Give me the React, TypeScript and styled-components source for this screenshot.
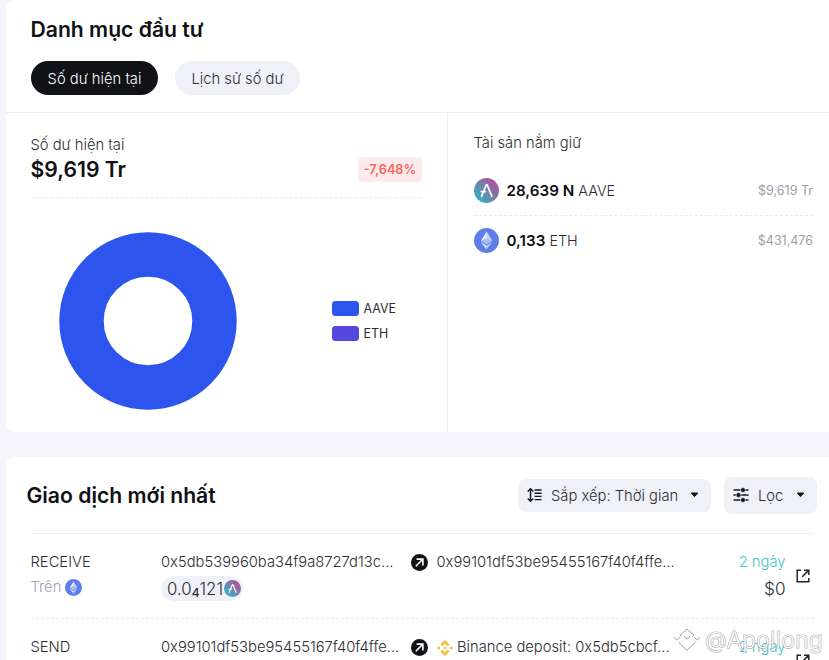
import React from "react";
import styled, { createGlobalStyle } from "styled-components";

const GlobalStyle = createGlobalStyle`
  *, *::before, *::after { box-sizing: border-box; }
  html, body { margin: 0; height: 100%; overflow: hidden; }
  body {
    background: #f6f5fc;
    color: #2c2d32;
    font-family: Inter, sans-serif;
    font-size: 14.75px;
    font-weight: 340;
  }
`;

const Page = styled.main`
  position: relative;
  display: flex;
  flex-direction: column;
  gap: 25px;
  height: 660px;
  padding-left: 6px;
  overflow: hidden;
`;

const Card = styled.section<{ $height: number }>`
  flex: none;
  display: flex;
  flex-direction: column;
  height: ${(p) => p.$height}px;
  background: #fff;
  border-radius: 9px 0 0 9px;
`;

const Title = styled.h2`
  margin: 0;
  font-size: 21.15px;
  font-weight: 600;
  line-height: 30px;
  color: #0f1013;
  white-space: nowrap;
`;

const CardHead = styled.header`
  height: 113px;
  padding: 15px 0 0 24.5px;
  border-bottom: 1px solid #ededf0;
`;

const Tabs = styled.nav`
  display: flex;
  gap: 17px;
  margin-top: 16px;
`;

const Tab = styled.button<{ $active?: boolean; $width: number }>`
  width: ${(p) => p.$width}px;
  height: 34px;
  padding: 2px 0 0 1px;
  border: 0;
  border-radius: 17px;
  font: inherit;
  line-height: 32px;
  white-space: nowrap;
  color: ${(p) => (p.$active ? "#fff" : "#2c2d32")};
  background: ${(p) => (p.$active ? "#111216" : "#f0f0f8")};
`;

const Columns = styled.div`
  display: grid;
  grid-template-columns: 442px 1fr;
  flex: 1;
`;

const Balance = styled.div`
  padding: 21px 25px 0 24.5px;
  border-right: 1px solid #ededf0;
`;

const Label = styled.div`
  line-height: 22px;
  white-space: nowrap;
`;

const BalanceLine = styled.div`
  display: flex;
  align-items: center;
  justify-content: space-between;
  height: 42px;
  padding-bottom: 15px;
  margin-bottom: 34px;
  border-bottom: 1px dashed #ececf0;
`;

const Amount = styled.div`
  font-size: 21.2px;
  font-weight: 600;
  line-height: 26px;
  color: #0f1013;
`;

const Change = styled.span`
  width: 64px;
  height: 25px;
  border-radius: 4px;
  background: #fdebec;
  color: #f8645c;
  font-size: 12.7px;
  font-weight: 600;
  line-height: 25px;
  text-align: center;
`;

const ChartArea = styled.div`
  display: flex;
  align-items: center;
  padding-left: 28.5px;
`;

const Legend = styled.ul`
  display: flex;
  flex-direction: column;
  gap: 10px;
  margin: 0 0 0 95px;
  padding: 0;
  list-style: none;
`;

const LegendItem = styled.li<{ $color: string }>`
  display: flex;
  align-items: center;
  gap: 5px;
  height: 15px;
  font-size: 12.4px;
  line-height: 15px;
  font-weight: 380;
  &::before {
    content: "";
    width: 26.5px;
    height: 15px;
    border-radius: 3.5px;
    background: ${(p) => p.$color};
  }
`;

const Holdings = styled.div`
  padding: 19px 16px 0 25.5px;
  ${Label} { margin-bottom: 10px; }
`;

const Holding = styled.div`
  display: flex;
  align-items: center;
  height: 52px;
  white-space: nowrap;
  & + & { height: 50px; border-top: 1px dashed #ececf0; margin-top: -1px; }
`;

const HoldingName = styled.span`
  flex: 1;
  margin-left: 8px;
  font-size: 14.4px;
  b { font-size: 15.2px; font-weight: 600; color: #0f1013; }
`;

const Worth = styled.span`
  font-size: 12.5px;
  font-weight: 400;
  color: #9c9eab;
`;

const ListHead = styled.header`
  display: flex;
  align-items: center;
  flex: none;
  height: 76px;
  padding: 0 12px 0 20.5px;
  ${Title} { flex: 1; padding-top: 1px; }
`;

const DropButton = styled.button<{ $width: number; $height: number; $gap: number }>`
  display: flex;
  align-items: center;
  width: ${(p) => p.$width}px;
  height: ${(p) => p.$height}px;
  margin-left: 13px;
  padding: 0 12px 0 9px;
  border: 0;
  border-radius: 8px;
  background: #f0f0f7;
  color: #2c2d32;
  font: inherit;
  white-space: nowrap;
  span { flex: 1; margin-left: ${(p) => p.$gap}px; padding-top: 2px; text-align: left; }
`;

const Rows = styled.div`
  margin: 0 15.5px 0 24.5px;
  border-top: 1px solid #eeeef1;
`;

const Row = styled.article`
  display: grid;
  grid-template-columns: 130.5px 250px 25.5px 1fr 80px 28px;
  height: 85px;
  padding-top: 17px;
  border-bottom: 1px dashed #e9e9ed;
  white-space: nowrap;
`;

const Cell = styled.div<{ $end?: boolean }>`
  display: flex;
  flex-direction: column;
  gap: 2px;
  align-items: ${(p) => (p.$end ? "flex-end" : "flex-start")};
`;

const Line = styled.div`
  display: flex;
  align-items: center;
  height: 23px;
  line-height: 23px;
`;

const Network = styled(Line)`
  gap: 4px;
  height: 22px;
  color: #a0a1ad;
`;

const Recipient = styled(Line)`
  gap: 4.5px;
`;

const Time = styled(Line)`
  color: #3cc5cb;
`;

const Value = styled(Line)`
  height: 25px;
  font-size: 17.2px;
`;

const Token = styled.div`
  display: flex;
  align-items: center;
  width: 82px;
  height: 25px;
  padding-left: 6px;
  border-radius: 12.5px;
  background: #f0f0f8;
  font-size: 16.8px;
  sub {
    align-self: flex-end;
    font-size: 12px;
    font-weight: 450;
    line-height: 17px;
  }
  svg { margin-left: 1px; }
`;

const OpenLink = styled.div`
  padding: 18px 0 0 10.5px;
`;

const Watermark = styled.div`
  position: absolute;
  left: 673px;
  top: 624px;
  display: flex;
  align-items: center;
  gap: 4px;
  height: 30px;
  font-size: 22.6px;
  font-weight: 300;
  letter-spacing: 0.4px;
  white-space: nowrap;
  color: rgba(255, 255, 255, 0.95);
  -webkit-text-stroke: 1.2px rgba(125, 125, 130, 0.65);
  paint-order: stroke fill;
  pointer-events: none;
  svg { flex: none; margin-top: 1px; }
`;

const AaveIcon = ({ size, id }: { size: number; id: string }) => (
  <svg width={size} height={size} viewBox="0 0 25 25">
    <defs>
      <linearGradient id={id} x1="0.1" y1="0.85" x2="0.85" y2="0.15">
        <stop offset="0.05" stopColor="#35afc0" />
        <stop offset="0.95" stopColor="#ac5599" />
      </linearGradient>
    </defs>
    <circle cx="12.5" cy="12.5" r="12.5" fill={`url(#${id})`} />
    <path d="M7.6 18.4 9 14.9M10 12.4l2-5q.7-1.4 1.4 0l4.4 11M7.2 13.6h4.2" fill="none" stroke="#fff" strokeWidth="1.7" strokeLinecap="round" />
  </svg>
);

const EthIcon = ({ size }: { size: number }) => (
  <svg width={size} height={size} viewBox="0 0 25 25">
    <circle cx="12.5" cy="12.5" r="12.5" fill="#5f7ee9" />
    <path d="M12.5 3.5 7 12.8l5.5 3.2 5.5-3.2z" fill="#e9edfd" />
    <path d="M12.5 3.5V16l5.5-3.2z" fill="#c3cef8" />
    <path d="m7 12.8 5.5-2.4 5.5 2.4-5.5 3.2z" fill="#a9b8f4" />
    <path d="m7 14.2 5.5 7.4v-4.1z" fill="#e9edfd" />
    <path d="m18 14.2-5.5 7.4v-4.1z" fill="#c3cef8" />
  </svg>
);

const Donut = () => (
  <svg width="178" height="178" viewBox="0 0 178 178">
    <circle cx="89" cy="89" r="66.5" fill="none" stroke="#2d54ec" strokeWidth="44.4" />
  </svg>
);

const SortIcon = () => (
  <svg width="16" height="16" viewBox="0 0 16 16" fill="none" stroke="#17181c">
    <path d="M3.5 2v12" strokeWidth="1.5" />
    <path d="M1.2 4.1 3.5 1.7l2.3 2.4M1.2 11.9l2.3 2.4 2.3-2.4" strokeWidth="1.5" strokeLinecap="round" strokeLinejoin="round" />
    <path d="M7.6 3h7M7.6 6.2h7M7.6 9.4h7M7.6 12.6h7" strokeWidth="1.4" />
  </svg>
);

const FilterIcon = () => (
  <svg width="16" height="16" viewBox="0 0 16 16">
    <path d="M.5 3h15M.5 8h15M.5 13h15" stroke="#17181c" strokeWidth="1.5" />
    <g fill="#17181c" stroke="#f0f0f7" strokeWidth=".7">
      <circle cx="10" cy="3" r="2.5" />
      <circle cx="5.5" cy="8" r="2.5" />
      <circle cx="10" cy="13" r="2.5" />
    </g>
  </svg>
);

const Caret = () => (
  <svg width="9" height="6" viewBox="0 0 9 6">
    <path d="M1.2 1h6.6L4.5 4.7z" fill="#17181c" stroke="#17181c" strokeLinejoin="round" />
  </svg>
);

const ArrowIcon = () => (
  <svg width="17" height="17" viewBox="0 0 17 17">
    <circle cx="8.5" cy="8.5" r="8.5" fill="#111216" />
    <path d="m4.8 12.2 6.4-6.4M5.6 5.1h6.3v6.3" fill="none" stroke="#fff" strokeWidth="1.6" />
  </svg>
);

const ExternalIcon = () => (
  <svg width="14" height="14" viewBox="0 0 14 14" fill="none" stroke="#222328" strokeWidth="1.5">
    <path d="M5 1.2H1.2v11.6h11.6V9" />
    <path d="M8 1.2h4.8V6M12.4 1.6 6.2 7.8" />
  </svg>
);

const BinanceIcon = () => (
  <svg width="16" height="16" viewBox="0 0 16 16" fill="#f5bb45">
    <path d="m8 0 4.6 4.6-1.8 1.8L8 3.6 5.2 6.4 3.4 4.6zM8 16l4.6-4.6-1.8-1.8L8 12.4 5.2 9.6l-1.8 1.8zM1.8 6.2 3.6 8 1.8 9.8 0 8zM14.2 6.2 16 8l-1.8 1.8L12.4 8zM8 6.2 9.8 8 8 9.8 6.2 8z" />
  </svg>
);

const WatermarkIcon = () => (
  <svg width="28" height="24" viewBox="0 0 28 24" fill="none" stroke="#a0a0a4" strokeLinejoin="round">
    <path d="M7 7.2 14 1l7 6.2-1.8 1.5M7 7.2l1.8 1.5M.8 9.2l3 2.8 3-2.8M11 8.4l3 2.8 3-2.8M21.2 9.2l3 2.8 3-2.8M5.5 14.2l8.5 8 8.5-8" />
  </svg>
);

type Transaction = { kind: string; from: string; to: string; binance?: boolean };

const transactions: Transaction[] = [
  { kind: "RECEIVE", from: "0x5db539960ba34f9a8727d13c...", to: "0x99101df53be95455167f40f4ffe..." },
  { kind: "SEND", from: "0x99101df53be95455167f40f4ffe...", to: "Binance deposit: 0x5db5cbcf...", binance: true },
];

const TransactionRow = ({ tx, details }: { tx: Transaction; details: boolean }) => (
  <Row>
    <Cell>
      <Line>{tx.kind}</Line>
      {details && <Network>Trên <EthIcon size={17} /></Network>}
    </Cell>
    <Cell>
      <Line>{tx.from}</Line>
      {details && (
        <Token>0.0<sub>4</sub>121<AaveIcon size={17} id="aave-token" /></Token>
      )}
    </Cell>
    <Cell><Line><ArrowIcon /></Line></Cell>
    <Cell>
      <Recipient>{tx.binance && <BinanceIcon />}{tx.to}</Recipient>
    </Cell>
    <Cell $end>
      <Time>2 ngày</Time>
      {details && <Value>$0</Value>}
    </Cell>
    <OpenLink><ExternalIcon /></OpenLink>
  </Row>
);

export default function App() {
  return (
    <>
      <GlobalStyle />
      <Page>
        <Card $height={432}>
          <CardHead>
            <Title>Danh mục đầu tư</Title>
            <Tabs>
              <Tab $active $width={127}>Số dư hiện tại</Tab>
              <Tab $width={125}>Lịch sử số dư</Tab>
            </Tabs>
          </CardHead>
          <Columns>
            <Balance>
              <Label>Số dư hiện tại</Label>
              <BalanceLine>
                <Amount>$9,619 Tr</Amount>
                <Change>-7,648%</Change>
              </BalanceLine>
              <ChartArea>
                <Donut />
                <Legend>
                  <LegendItem $color="#2d54ec">AAVE</LegendItem>
                  <LegendItem $color="#5548df">ETH</LegendItem>
                </Legend>
              </ChartArea>
            </Balance>
            <Holdings>
              <Label>Tài sản nắm giữ</Label>
              <Holding>
                <AaveIcon size={25} id="aave-holding" />
                <HoldingName><b>28,639 N</b> AAVE</HoldingName>
                <Worth>$9,619 Tr</Worth>
              </Holding>
              <Holding>
                <EthIcon size={25} />
                <HoldingName><b>0,133</b> ETH</HoldingName>
                <Worth>$431,476</Worth>
              </Holding>
            </Holdings>
          </Columns>
        </Card>
        <Card $height={230}>
          <ListHead>
            <Title>Giao dịch mới nhất</Title>
            <DropButton $width={193} $height={33} $gap={8}>
              <SortIcon />
              <span>Sắp xếp: Thời gian</span>
              <Caret />
            </DropButton>
            <DropButton $width={93} $height={37} $gap={9}>
              <FilterIcon />
              <span>Lọc</span>
              <Caret />
            </DropButton>
          </ListHead>
          <Rows>
            {transactions.map((tx, i) => (
              <TransactionRow key={tx.kind} tx={tx} details={i === 0} />
            ))}
          </Rows>
        </Card>
        <Watermark><WatermarkIcon />@Apollong</Watermark>
      </Page>
    </>
  );
}
